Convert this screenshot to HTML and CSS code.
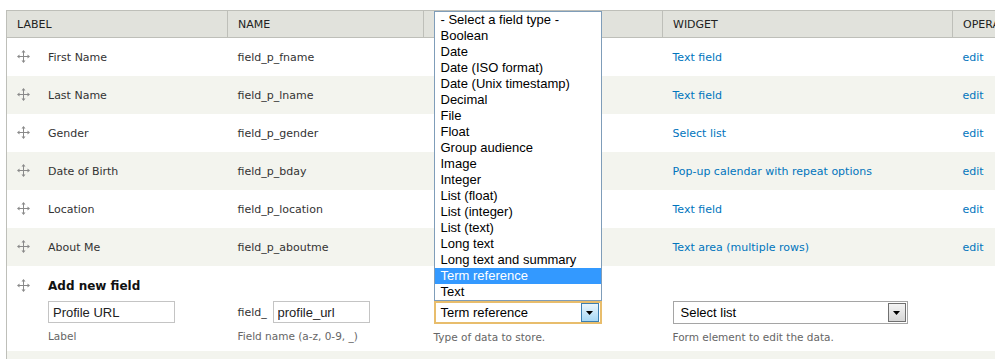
FILE: index.html
```html
<!DOCTYPE html>
<html lang="en">

<head>
    <meta charset="UTF-8">
    <title>Manage fields</title>
    <link rel="stylesheet" href="styles.css">
</head>

<body>
    <div class="page">
        <table class="field-table">
            <colgroup>
                <col class="col-label">
                <col class="col-name">
                <col class="col-type">
                <col class="col-widget">
                <col class="col-ops">
            </colgroup>
            <thead>
                <tr>
                    <th>Label</th>
                    <th>Name</th>
                    <th>Field</th>
                    <th>Widget</th>
                    <th>Operations</th>
                </tr>
            </thead>
            <tbody>
                <tr class="odd">
                    <td><span class="drag"><svg width="13" height="13" viewBox="0 0 13 13"><path d="M6.5 2v9M2 6.5h9" stroke="#8a8a8a" stroke-width="1"/><path d="M6.5 0L4.5 2.5h4zM6.5 13l-2-2.5h4zM0 6.5l2.5-2v4zM13 6.5l-2.5-2v4z" fill="#8a8a8a"/></svg></span>First Name</td>
                    <td>field_p_fname</td>
                    <td></td>
                    <td><a href="#">Text field</a></td>
                    <td><a href="#">edit</a></td>
                </tr>
                <tr class="even">
                    <td><span class="drag"><svg width="13" height="13" viewBox="0 0 13 13"><path d="M6.5 2v9M2 6.5h9" stroke="#8a8a8a" stroke-width="1"/><path d="M6.5 0L4.5 2.5h4zM6.5 13l-2-2.5h4zM0 6.5l2.5-2v4zM13 6.5l-2.5-2v4z" fill="#8a8a8a"/></svg></span>Last Name</td>
                    <td>field_p_lname</td>
                    <td></td>
                    <td><a href="#">Text field</a></td>
                    <td><a href="#">edit</a></td>
                </tr>
                <tr class="odd">
                    <td><span class="drag"><svg width="13" height="13" viewBox="0 0 13 13"><path d="M6.5 2v9M2 6.5h9" stroke="#8a8a8a" stroke-width="1"/><path d="M6.5 0L4.5 2.5h4zM6.5 13l-2-2.5h4zM0 6.5l2.5-2v4zM13 6.5l-2.5-2v4z" fill="#8a8a8a"/></svg></span>Gender</td>
                    <td>field_p_gender</td>
                    <td></td>
                    <td><a href="#">Select list</a></td>
                    <td><a href="#">edit</a></td>
                </tr>
                <tr class="even">
                    <td><span class="drag"><svg width="13" height="13" viewBox="0 0 13 13"><path d="M6.5 2v9M2 6.5h9" stroke="#8a8a8a" stroke-width="1"/><path d="M6.5 0L4.5 2.5h4zM6.5 13l-2-2.5h4zM0 6.5l2.5-2v4zM13 6.5l-2.5-2v4z" fill="#8a8a8a"/></svg></span>Date of Birth</td>
                    <td>field_p_bday</td>
                    <td></td>
                    <td><a href="#">Pop-up calendar with repeat options</a></td>
                    <td><a href="#">edit</a></td>
                </tr>
                <tr class="odd">
                    <td><span class="drag"><svg width="13" height="13" viewBox="0 0 13 13"><path d="M6.5 2v9M2 6.5h9" stroke="#8a8a8a" stroke-width="1"/><path d="M6.5 0L4.5 2.5h4zM6.5 13l-2-2.5h4zM0 6.5l2.5-2v4zM13 6.5l-2.5-2v4z" fill="#8a8a8a"/></svg></span>Location</td>
                    <td>field_p_location</td>
                    <td></td>
                    <td><a href="#">Text field</a></td>
                    <td><a href="#">edit</a></td>
                </tr>
                <tr class="even">
                    <td><span class="drag"><svg width="13" height="13" viewBox="0 0 13 13"><path d="M6.5 2v9M2 6.5h9" stroke="#8a8a8a" stroke-width="1"/><path d="M6.5 0L4.5 2.5h4zM6.5 13l-2-2.5h4zM0 6.5l2.5-2v4zM13 6.5l-2.5-2v4z" fill="#8a8a8a"/></svg></span>About Me</td>
                    <td>field_p_aboutme</td>
                    <td></td>
                    <td><a href="#">Text area (multiple rows)</a></td>
                    <td><a href="#">edit</a></td>
                </tr>
                <tr class="odd add-new">
                    <td>
                        <div class="add-title"><span class="drag"><svg width="13" height="13" viewBox="0 0 13 13"><path d="M6.5 2v9M2 6.5h9" stroke="#8a8a8a" stroke-width="1"/><path d="M6.5 0L4.5 2.5h4zM6.5 13l-2-2.5h4zM0 6.5l2.5-2v4zM13 6.5l-2.5-2v4z" fill="#8a8a8a"/></svg></span>Add new field</div>
                        <div class="form-item indent">
                            <input class="form-text label-input" type="text" value="Profile URL">
                            <div class="description">Label</div>
                        </div>
                    </td>
                    <td class="add-cell">
                        <div class="form-item">
                            <span class="prefix">field_</span><input class="form-text name-input" type="text" value="profile_url">
                            <div class="description">Field name (a-z, 0-9, _)</div>
                        </div>
                    </td>
                    <td class="add-cell">
                        <div class="form-item">
                            <div class="select-wrap">
                                <ul class="select-popup">
                                    <li>- Select a field type -</li>
                                    <li>Boolean</li>
                                    <li>Date</li>
                                    <li>Date (ISO format)</li>
                                    <li>Date (Unix timestamp)</li>
                                    <li>Decimal</li>
                                    <li>File</li>
                                    <li>Float</li>
                                    <li>Group audience</li>
                                    <li>Image</li>
                                    <li>Integer</li>
                                    <li>List (float)</li>
                                    <li>List (integer)</li>
                                    <li>List (text)</li>
                                    <li>Long text</li>
                                    <li>Long text and summary</li>
                                    <li class="selected">Term reference</li>
                                    <li>Text</li>
                                </ul>
                                <div class="fake-select type-select focused">
                                    <span class="value">Term reference</span>
                                    <span class="arrow"><svg width="7" height="4" viewBox="0 0 7 4"><path d="M0 0h7L3.5 4z" fill="#000"/></svg></span>
                                </div>
                            </div>
                            <div class="description">Type of data to store.</div>
                        </div>
                    </td>
                    <td class="add-cell">
                        <div class="form-item">
                            <div class="fake-select widget-select">
                                <span class="value">Select list</span>
                                <span class="arrow"><svg width="7" height="4" viewBox="0 0 7 4"><path d="M0 0h7L3.5 4z" fill="#000"/></svg></span>
                            </div>
                            <div class="description">Form element to edit the data.</div>
                        </div>
                    </td>
                    <td></td>
                </tr>
                <tr class="even">
                    <td></td>
                    <td></td>
                    <td></td>
                    <td></td>
                    <td></td>
                </tr>
            </tbody>
        </table>
    </div>
</body>

</html>
```

FILE: styles.css
```css
body {
    margin: 0;
    font-family: "DejaVu Sans", Verdana, sans-serif;
    font-size: 11px;
    color: #333;
    background-color: #fff;
    overflow: hidden;
}

.page {
    padding: 10px 0 0 6px;
}

.field-table {
    border-collapse: collapse;
    table-layout: fixed;
    width: 1100px;
    border-left: 1px solid #bebfb9;
}

.col-label {
    width: 221px;
}

.col-name {
    width: 196px;
}

.col-type {
    width: 239px;
}

.col-widget {
    width: 290px;
}

.col-ops {
    width: 154px;
}

th {
    background-color: #e1e2dc;
    border: 1px solid #bebfb9;
    height: 26px;
    padding: 0 10px;
    text-align: left;
    font-weight: normal;
    text-transform: uppercase;
    color: #222;
}

td {
    height: 38px;
    padding: 0 10px;
    vertical-align: middle;
    white-space: nowrap;
}

tr.odd {
    background-color: #fff;
}

tr.even {
    background-color: #f3f4ee;
}

a {
    color: #0074bd;
    text-decoration: none;
}

.drag {
    display: inline-block;
    width: 13px;
    height: 13px;
    margin-right: 18px;
    vertical-align: -2px;
}

.drag svg {
    display: block;
}

/* add new field row */
.add-new td {
    vertical-align: top;
    padding-top: 12px;
    padding-bottom: 6px;
}

.add-new td.add-cell {
    padding-top: 35px;
}

.add-title {
    font-weight: bold;
    font-size: 12px;
    line-height: 16px;
    color: #111;
}

.indent {
    margin-left: 31px;
    margin-top: 7px;
}

.form-text {
    font-family: "Liberation Sans", Arial, sans-serif;
    font-size: 13px;
    color: #222;
    height: 22px;
    padding: 0 4px;
    border: 1px solid #c4c4c4;
    box-sizing: border-box;
    margin: 0;
    vertical-align: middle;
}

.label-input {
    width: 127px;
}

.name-input {
    width: 97px;
}

.prefix {
    display: inline-block;
    width: 35px;
    vertical-align: middle;
}

.description {
    color: #666;
    font-size: 10.5px;
    line-height: 15px;
    margin-top: 6px;
}

.select-wrap {
    position: relative;
    width: 168px;
}

.fake-select {
    display: flex;
    align-items: center;
    justify-content: space-between;
    height: 23px;
    box-sizing: border-box;
    font-family: "Liberation Sans", Arial, sans-serif;
    font-size: 13px;
    color: #000;
    background-color: #fff;
    border: 1px solid #a5a5a5;
    padding: 0 1px 0 6px;
}

.fake-select .arrow {
    display: flex;
    align-items: center;
    justify-content: center;
    width: 16px;
    height: 17px;
    border: 1px solid #707070;
    background: linear-gradient(#f4f4f4, #d6d6d6);
}

.type-select.focused {
    border: 2px solid #e8bd6c;
    padding-left: 5px;
}

.type-select .arrow {
    border-color: #3c7fb1;
    background: linear-gradient(#eaf6fd, #a7d8f5);
}

.widget-select {
    width: 235px;
    padding-left: 7px;
}

.select-popup {
    position: absolute;
    left: 0;
    bottom: 100%;
    width: 168px;
    box-sizing: border-box;
    margin: 0;
    padding: 0;
    list-style: none;
    background-color: #fff;
    border: 1px solid #7f9db9;
    font-family: "Liberation Sans", Arial, sans-serif;
    font-size: 13px;
    color: #000;
    z-index: 5;
}

.select-popup li {
    height: 16px;
    line-height: 16px;
    padding: 0 6px;
}

.select-popup li.selected {
    background-color: #3399ff;
    color: #fff;
}
```
